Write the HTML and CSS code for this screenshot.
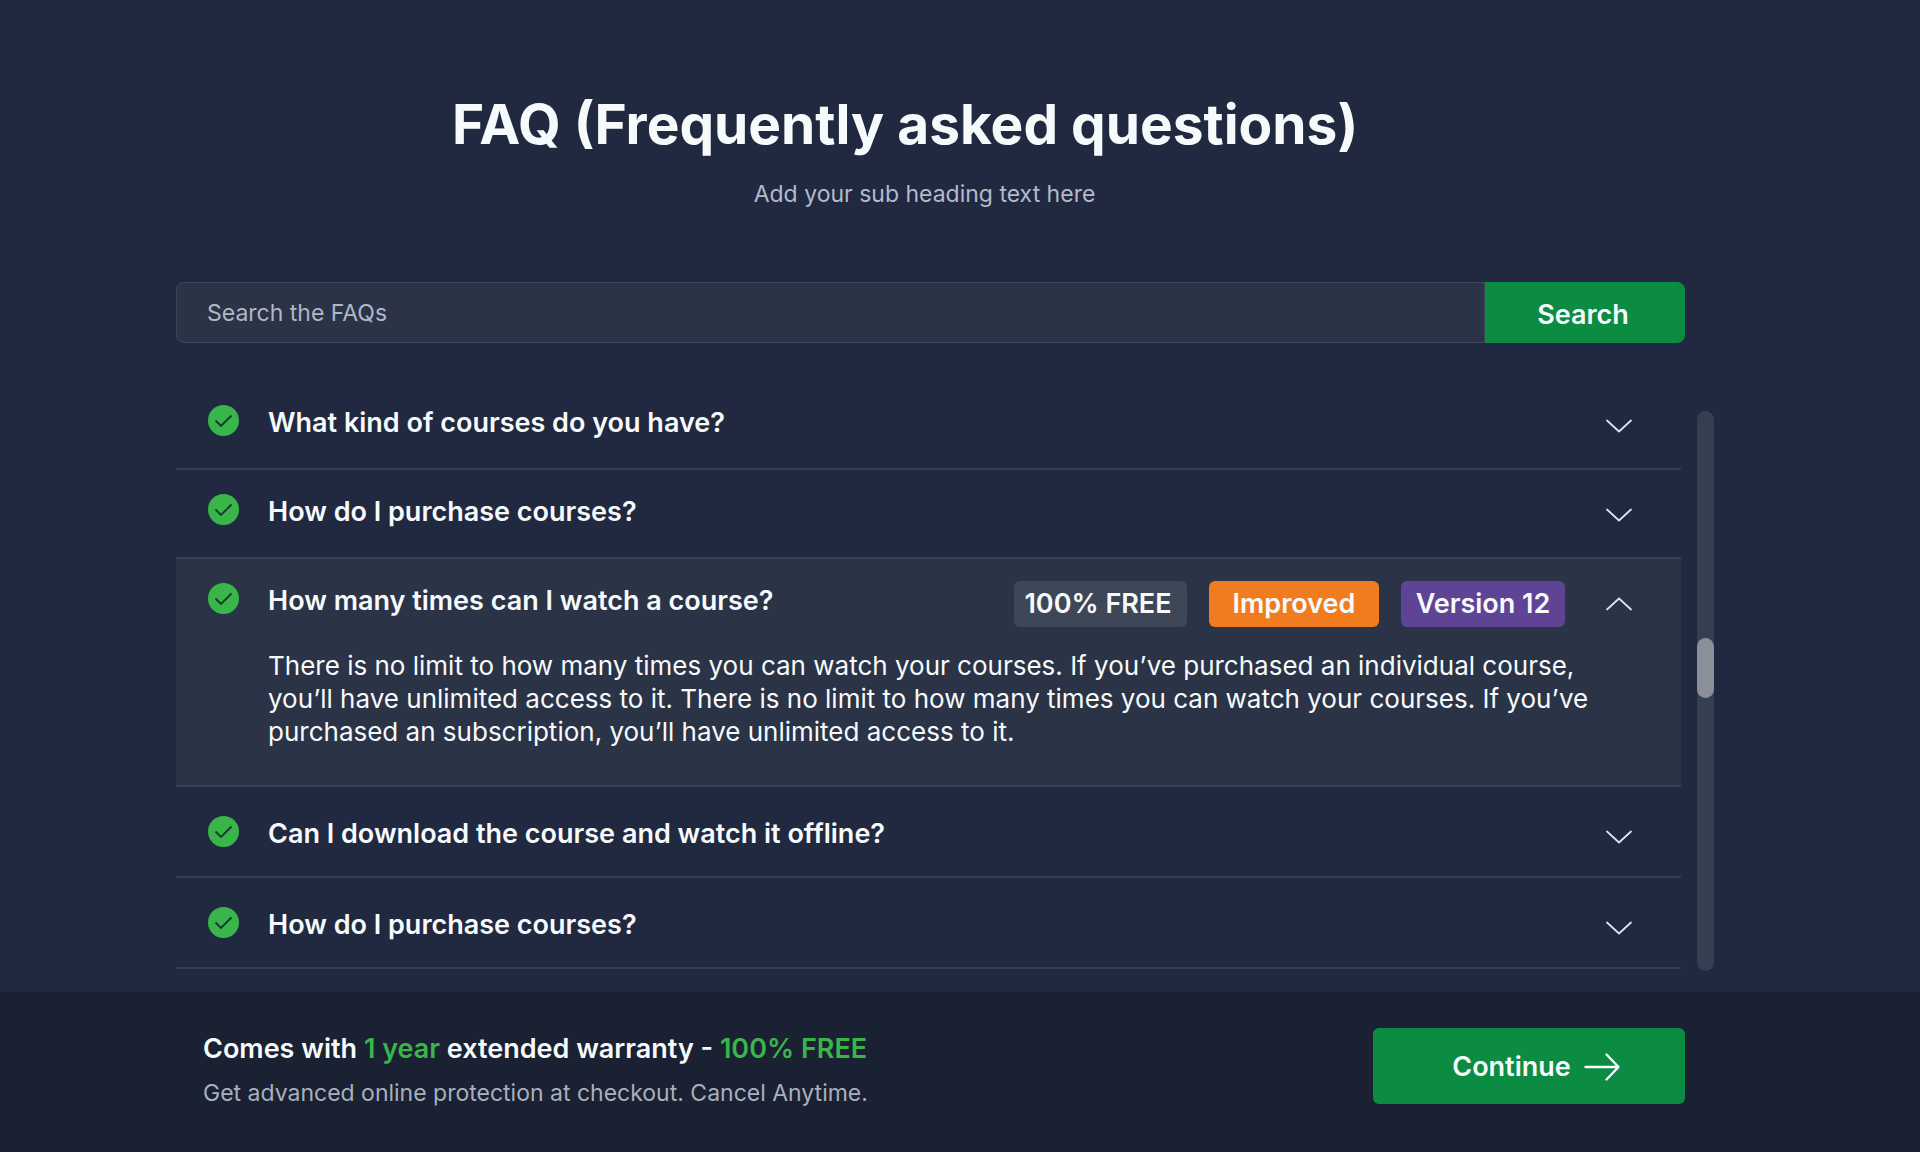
FILE: index.html
```html
<!DOCTYPE html>
<html lang="en">
<head>
<meta charset="utf-8">
<meta name="viewport" content="width=device-width, initial-scale=1">
<title>FAQ</title>
<link rel="stylesheet" href="styles.css">
</head>
<body>
<svg class="sprite" aria-hidden="true">
  <symbol id="check" viewBox="0 0 31 31">
    <circle cx="15.5" cy="15.5" r="15.5" fill="#39b54a"/>
    <path d="M7.5 15.5 13 21 23.5 10.5" fill="none" stroke="#123a2c" stroke-width="1.8"/>
  </symbol>
  <symbol id="chevron" viewBox="0 0 26 14">
    <path d="M1 1.5 13 12.5 25 1.5" fill="none" stroke="#dfe5f3" stroke-width="1.7" stroke-linecap="round" stroke-linejoin="round"/>
  </symbol>
</svg>

<main class="main">
  <header class="intro">
    <h1 class="title">FAQ (Frequently asked questions)</h1>
    <p class="subtitle">Add your sub heading text here</p>
  </header>

  <form class="search" role="search">
    <input class="search-input" type="search" placeholder="Search the FAQs" aria-label="Search the FAQs">
    <button class="search-button" type="button">Search</button>
  </form>

  <div class="faq">
    <ul class="list">
      <li class="item">
        <button class="question" type="button" aria-expanded="false">
          <svg class="check" aria-hidden="true"><use href="#check"/></svg>
          <span class="label">What kind of courses do you have?</span>
          <svg class="chevron" aria-hidden="true"><use href="#chevron"/></svg>
        </button>
      </li>
      <li class="item">
        <button class="question" type="button" aria-expanded="false">
          <svg class="check" aria-hidden="true"><use href="#check"/></svg>
          <span class="label">How do I purchase courses?</span>
          <svg class="chevron" aria-hidden="true"><use href="#chevron"/></svg>
        </button>
      </li>
      <li class="item item-open">
        <button class="question" type="button" aria-expanded="true" aria-controls="answer-3">
          <svg class="check" aria-hidden="true"><use href="#check"/></svg>
          <span class="label">How many times can I watch a course?</span>
          <span class="tags">
            <span class="tag tag-free">100% FREE</span>
            <span class="tag tag-improved">Improved</span>
            <span class="tag tag-version">Version 12</span>
          </span>
          <svg class="chevron" aria-hidden="true"><use href="#chevron"/></svg>
        </button>
        <p class="answer" id="answer-3">There is no limit to how many times you can watch your courses. If you’ve purchased an individual course,<br>you’ll have unlimited access to it. There is no limit to how many times you can watch your courses. If you’ve<br>purchased an subscription, you’ll have unlimited access to it.</p>
      </li>
      <li class="item item-roomy">
        <button class="question" type="button" aria-expanded="false">
          <svg class="check" aria-hidden="true"><use href="#check"/></svg>
          <span class="label">Can I download the course and watch it offline?</span>
          <svg class="chevron" aria-hidden="true"><use href="#chevron"/></svg>
        </button>
      </li>
      <li class="item item-roomy">
        <button class="question" type="button" aria-expanded="false">
          <svg class="check" aria-hidden="true"><use href="#check"/></svg>
          <span class="label">How do I purchase courses?</span>
          <svg class="chevron" aria-hidden="true"><use href="#chevron"/></svg>
        </button>
      </li>
    </ul>
    <div class="scrollbar" aria-hidden="true"><div class="thumb"></div></div>
  </div>
</main>

<footer class="footer">
  <div class="offer">
    <p class="offer-title">Comes with <span class="accent">1 year</span> extended warranty - <span class="accent">100% FREE</span></p>
    <p class="offer-text">Get advanced online protection at checkout. Cancel Anytime.</p>
  </div>
  <button class="continue" type="button">
    Continue
    <svg class="arrow" viewBox="0 0 36 28" aria-hidden="true"><path d="M1.5 14H34M22.5 1.5 34.5 14 22.5 26.5" fill="none" stroke="currentColor" stroke-width="2.4" stroke-linecap="round" stroke-linejoin="round"/></svg>
  </button>
</footer>
</body>
</html>
```
FILE: styles.css
```css
* {
  box-sizing: border-box;
}

body {
  display: flex;
  flex-direction: column;
  min-height: 100vh;
  margin: 0;
  background: #212941;
  color: #f7fafb;
  font-family: Inter, "Liberation Sans", sans-serif;
  font-size: 27px;
  line-height: 36px;
}

h1, p, ul {
  margin: 0;
  padding: 0;
}

button {
  border: 0;
  color: inherit;
  font: inherit;
  font-weight: 600;
  cursor: pointer;
}

.sprite {
  display: none;
}

.main {
  padding: 91px 206px 23px 176px;
}

/* Heading */
.intro {
  margin-right: 29px;
  text-align: center;
}

.title {
  padding-right: 51px;
  font-size: 55px;
  line-height: 66px;
  font-weight: 700;
}

.subtitle {
  margin-top: 23px;
  padding-right: 12px;
  color: #b3bac9;
  font-size: 23px;
  line-height: 28px;
}

/* Search */
.search {
  display: flex;
  height: 61px;
  margin: 74px 29px 0 0;
}

.search-input {
  flex: 1;
  min-width: 0;
  padding: 0 30px;
  border: 1px solid #3d465b;
  border-radius: 8px 0 0 8px;
  outline: 0;
  appearance: none;
  background: #2b3347;
  color: inherit;
  font: inherit;
  font-size: 23px;
}

.search-input::placeholder {
  color: #b0b7c6;
  opacity: 1;
}

.search-button {
  width: 200px;
  padding: 4px 4px 0 0;
  border-radius: 0 8px 8px 0;
  background: #0c8c43;
}

/* Question list */
.faq {
  display: flex;
  gap: 16px;
  margin-top: 38px;
}

.list {
  flex: 1;
  list-style: none;
}

.item {
  padding: 24px 49px 27px 32px;
  border-bottom: 2px solid #363e55;
}

.item-open {
  padding-bottom: 37px;
  background: #2b3347;
}

.item-roomy {
  padding-top: 29px;
  padding-bottom: 24px;
}

.question {
  display: flex;
  align-items: flex-start;
  width: 100%;
  padding: 0;
  background: none;
  text-align: left;
}

.check {
  flex: none;
  width: 31px;
  height: 31px;
}

.label {
  flex: 1;
  margin-left: 29px;
}

.chevron {
  flex: none;
  width: 26px;
  height: 14px;
  margin: 14px 0 0 41px;
}

.item-open .chevron {
  transform: rotate(180deg);
}

.tags {
  display: flex;
  gap: 22px;
  margin-top: -2px;
}

.tag {
  height: 46px;
  border-radius: 6px;
  line-height: 46px;
  text-align: center;
  white-space: nowrap;
}

.tag-free {
  width: 173px;
  padding-right: 5px;
  background: #3e4757;
}

.tag-improved {
  width: 170px;
  background: #f17c1f;
}

.tag-version {
  width: 164px;
  background: #5f4496;
}

.answer {
  margin: 22px 0 0 60px;
  font-size: 26px;
  line-height: 33px;
}

.scrollbar {
  width: 17px;
  margin: 30px 0 -2px;
  padding-top: 227px;
  border-radius: 9px;
  background: #363e51;
}

.thumb {
  height: 60px;
  border-radius: 9px;
  background: #8a8f9a;
}

/* Footer */
.footer {
  display: flex;
  flex: 1;
  align-items: flex-start;
  justify-content: space-between;
  padding: 36px 235px 48px 203px;
  background: #192132;
}

.offer {
  padding-top: 3px;
}

.offer-title {
  font-weight: 600;
}

.accent {
  color: #39b54a;
}

.offer-text {
  margin-top: 8px;
  color: #a9b0bd;
  font-size: 23px;
}

.continue {
  display: flex;
  align-items: center;
  justify-content: center;
  gap: 13px;
  width: 312px;
  height: 76px;
  padding: 2px 0 0 14px;
  border-radius: 6px;
  background: #0c8c43;
}

.arrow {
  width: 36px;
  height: 28px;
}
```
